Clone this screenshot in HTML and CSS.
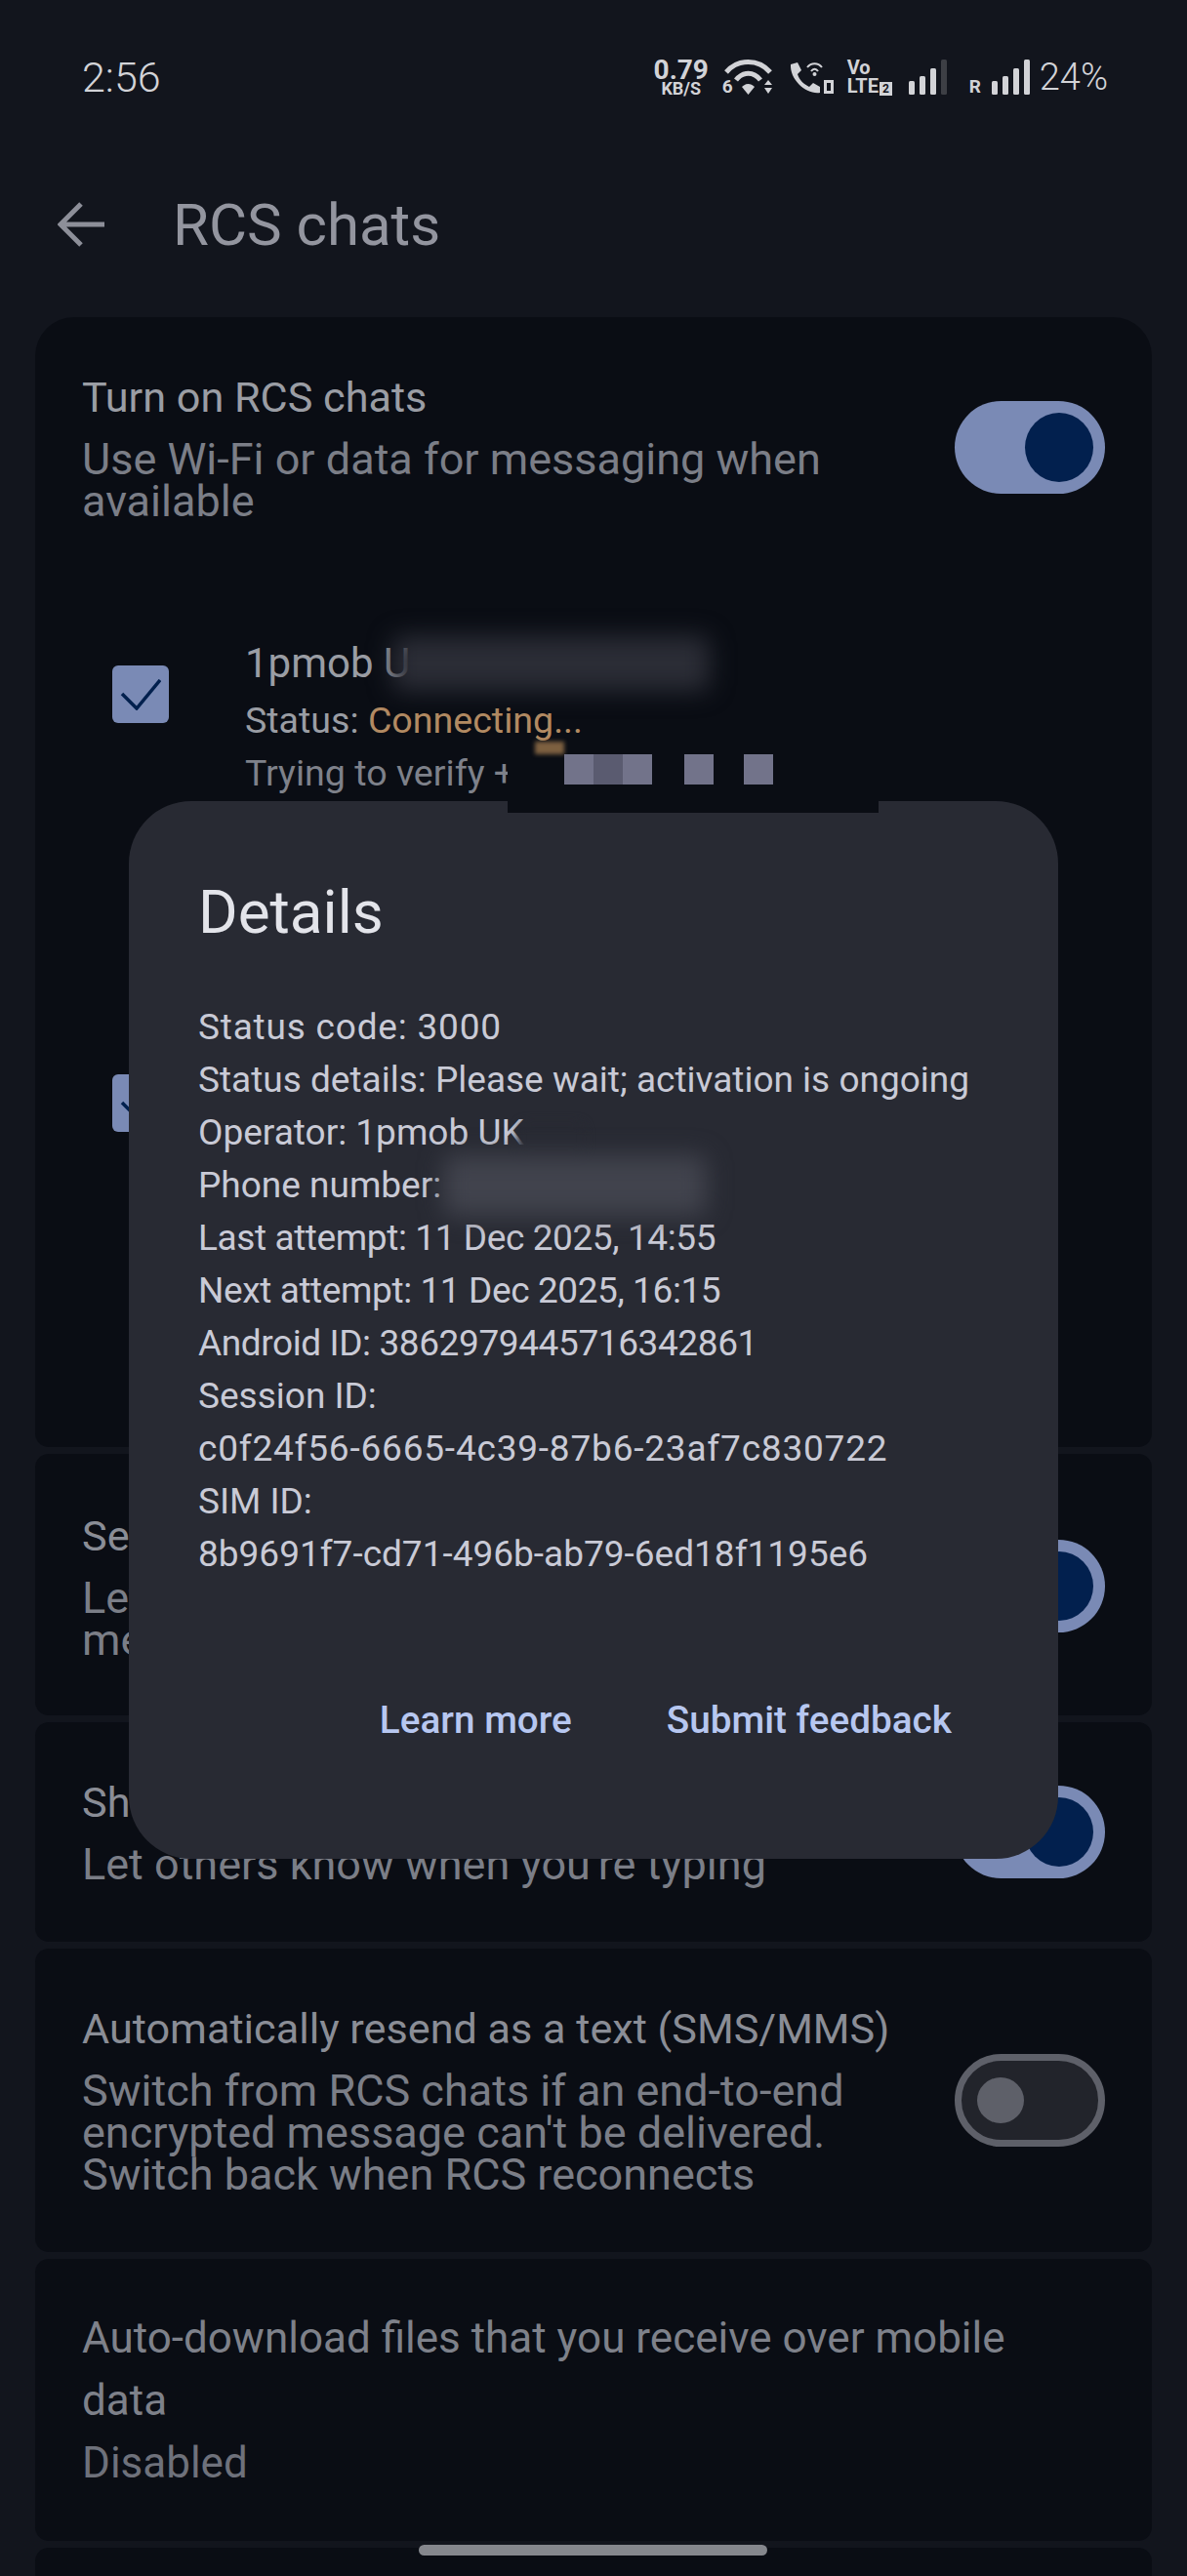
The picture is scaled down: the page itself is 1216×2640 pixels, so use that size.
FILE: index.html
```html
<!DOCTYPE html>
<html lang="en">
<head>
    <meta charset="UTF-8">
    <meta name="viewport" content="width=device-width, initial-scale=1.0">
    <title>RCS chats</title>
    <link rel="stylesheet" href="styles.css">
</head>
<body>
    <div class="screen">
        <div class="status-bar">
            <span class="clock">2:56</span>
            <div class="status-icons">
                <div class="speed"><span class="speed-num">0.79</span><span class="speed-unit">KB/S</span></div>
                <div class="wifi">
                    <span class="wifi-six">6</span>
                    <svg width="53" height="37" viewBox="0 0 53 37">
                        <path d="M4 13 C16 -1 37 -1 49 13" fill="none" stroke="#d2d3d7" stroke-width="5"/>
                        <path d="M14 21 C21 12 32 12 39 21" fill="none" stroke="#d2d3d7" stroke-width="5"/>
                        <path d="M20 28 C24 24 29 24 33 28 L26.500 36 Z" fill="#d2d3d7"/>
                        <path d="M43 26 L47 21 L51 26 Z M43 29 L51 29 L47 35 Z" fill="#d2d3d7"/>
                    </svg>
                </div>
                <svg class="call" width="47" height="37" viewBox="0 0 47 37">
                    <path d="M2 5 L9 3 L13 11 L9 15 C11 21 15 25 21 28 L25 24 L32 28 L32 34 C18 36 1 21 2 5 Z" fill="#d2d3d7"/>
                    <path d="M19 8 C23 3 30 3 34 8 M23 12 C25 9 28 9 30 12" fill="none" stroke="#d2d3d7" stroke-width="2"/>
                    <circle cx="26.500" cy="15" r="2" fill="#d2d3d7"/>
                    <path d="M36 21 H46 V35 H36 Z M39 24 V32 H43 V24 Z" fill="#d2d3d7" fill-rule="evenodd"/>
                </svg>
                <div class="volte"><span class="volte-top">Vo</span><span class="volte-low">LTE<span class="sim-two">2</span></span></div>
                <svg class="signal" width="39" height="37" viewBox="0 0 39 37">
                    <rect x="0" y="22" width="6" height="14" rx="1.500" fill="#d2d3d7"/>
                    <rect x="11" y="17" width="6" height="19" rx="1.500" fill="#d2d3d7"/>
                    <rect x="22" y="9" width="6" height="27" rx="1.500" fill="#d2d3d7"/>
                    <rect x="33" y="0" width="6" height="36" rx="1.500" fill="#3d3f45"/>
                </svg>
                <span class="roaming">R</span>
                <svg class="signal" width="39" height="37" viewBox="0 0 39 37">
                    <rect x="0" y="22" width="6" height="14" rx="1.500" fill="#d2d3d7"/>
                    <rect x="11" y="17" width="6" height="19" rx="1.500" fill="#d2d3d7"/>
                    <rect x="22" y="9" width="6" height="27" rx="1.500" fill="#d2d3d7"/>
                    <rect x="33" y="0" width="6" height="36" rx="1.500" fill="#d2d3d7"/>
                </svg>
                <span class="battery">24%</span>
            </div>
        </div>

        <div class="app-bar">
            <svg class="back" width="48" height="46" viewBox="0 0 48 46">
                <path d="M24 2 L3 23 L24 44 M3 23 H48" fill="none" stroke="#8d8f99" stroke-width="5"/>
            </svg>
            <span class="app-title">RCS chats</span>
        </div>

        <div class="cards">
            <section class="card card-main">
                <div class="row row-main">
                    <div class="row-text">
                        <div class="title">Turn on RCS chats</div>
                        <div class="sub">Use Wi-Fi or data for messaging when available</div>
                    </div>
                    <div class="switch on"><span class="thumb"></span></div>
                </div>
                <div class="sim">
                    <span class="check">
                        <svg width="42" height="32" viewBox="0 0 42 32"><path d="M2 15 L17 30 L41 1" fill="none" stroke="#02204e" stroke-width="3.500"/></svg>
                    </span>
                    <div class="sim-text">
                        <div class="sim-name">1pmob U</div>
                        <div class="sim-line">Status: <span class="connecting">Connecting...</span></div>
                        <div class="sim-line sim-dim">Trying to verify +</div>
                    </div>
                </div>
                <div class="sim">
                    <span class="check">
                        <svg width="42" height="32" viewBox="0 0 42 32"><path d="M2 15 L17 30 L41 1" fill="none" stroke="#02204e" stroke-width="3.500"/></svg>
                    </span>
                </div>
            </section>

            <section class="card card-read">
                <div class="row">
                    <div class="row-text">
                        <div class="title">Send read receipts</div>
                        <div class="sub">Let others know when you've read their messages</div>
                    </div>
                    <div class="switch on"><span class="thumb"></span></div>
                </div>
            </section>

            <section class="card card-typing">
                <div class="row">
                    <div class="row-text">
                        <div class="title">Show typing indicators</div>
                        <div class="sub">Let others know when you're typing</div>
                    </div>
                    <div class="switch on"><span class="thumb"></span></div>
                </div>
            </section>

            <section class="card card-resend">
                <div class="row">
                    <div class="row-text">
                        <div class="title">Automatically resend as a text (SMS/MMS)</div>
                        <div class="sub">Switch from RCS chats if an end-to-end encrypted message can't be delivered. Switch back when RCS reconnects</div>
                    </div>
                    <div class="switch off"><span class="thumb"></span></div>
                </div>
            </section>

            <section class="card card-download">
                <div class="loose">Auto-download files that you receive over mobile data</div>
                <div class="loose sub-tone">Disabled</div>
            </section>

            <section class="card card-last"></section>
        </div>

        <!-- parches que tapan los datos privados -->
        <div class="smudge smudge-name"></div>

        <div class="dialog">
            <h2 class="dialog-title">Details</h2>
            <div class="dialog-body">
                <div class="wide">Status code: 3000</div>
                <div>Status details: Please wait; activation is ongoing</div>
                <div>Operator: 1pmob UK</div>
                <div>Phone number:</div>
                <div class="tight">Last attempt: 11 Dec 2025, 14:55</div>
                <div class="tight">Next attempt: 11 Dec 2025, 16:15</div>
                <div class="tight">Android ID: 3862979445716342861</div>
                <div>Session ID:</div>
                <div class="wide">c0f24f56-6665-4c39-87b6-23af7c830722</div>
                <div>SIM ID:</div>
                <div>8b9691f7-cd71-496b-ab79-6ed18f1195e6</div>
            </div>
            <div class="dialog-actions">
                <span>Learn more</span>
                <span>Submit feedback</span>
            </div>
        </div>
        <div class="smudge smudge-operator"></div>
        <div class="smudge smudge-phone"></div>
        <div class="censor"></div>
        <div class="orange-bit"></div>
        <div class="blocks">
            <span class="block"></span><span class="block block-dark"></span><span class="block"></span>
            <span class="block block-gap"></span><span class="block block-gap2"></span>
        </div>

        <div class="home-bar"></div>
    </div>
</body>
</html>
```

FILE: styles.css
```css
* {
    box-sizing: border-box;
}
body {
    margin: 0;
    background-color: #12151d;
    font-family: Roboto, "Noto Sans", sans-serif;
}
.screen {
    position: relative;
    width: 1216px;
    height: 2640px;
    overflow: hidden;
    background-color: #12151d;
}

/* barra de estado */
.status-bar {
    height: 140px;
    padding: 58px 81px 0 84px;
    display: flex;
    justify-content: space-between;
    align-items: flex-start;
    color: #d2d3d7;
}
.clock {
    font-size: 43px;
    line-height: 42px;
    font-weight: 300;
}
.status-icons {
    display: flex;
    align-items: flex-end;
    height: 38px;
    margin-top: 2px;
}
.speed {
    display: flex;
    flex-direction: column;
    align-items: center;
    width: 56px;
    font-weight: 700;
    margin-right: 14px;
}
.speed-num {
    font-size: 28px;
    line-height: 23px;
}
.speed-unit {
    font-size: 18px;
    line-height: 15px;
}
.wifi {
    position: relative;
    width: 53px;
    height: 37px;
    margin-right: 15px;
}
.wifi-six {
    position: absolute;
    left: 0;
    bottom: 0;
    font-size: 19px;
    line-height: 19px;
    font-weight: 700;
}
.call {
    margin-right: 13px;
}
.volte {
    display: flex;
    flex-direction: column;
    width: 47px;
    font-size: 20px;
    line-height: 19px;
    font-weight: 700;
    margin-right: 16px;
}
.sim-two {
    display: inline-block;
    width: 13px;
    height: 14px;
    margin-left: 1px;
    font-size: 12px;
    line-height: 14px;
    text-align: center;
    color: #12151d;
    background-color: #d2d3d7;
}
.roaming {
    width: 12px;
    margin: 0 11px 0 23px;
    font-size: 19px;
    line-height: 19px;
    font-weight: 700;
}
.battery {
    margin-left: 10px;
    font-size: 38px;
    line-height: 38px;
    font-weight: 300;
}

/* encabezado */
.app-bar {
    height: 185px;
    padding: 0 0 5px 59px;
    display: flex;
    align-items: center;
    gap: 70px;
}
.app-title {
    font-size: 60px;
    color: #93959f;
}

/* tarjetas */
.cards {
    padding: 0 36px;
    display: flex;
    flex-direction: column;
    gap: 7px;
}
.card {
    background-color: #0a0d14;
    border-radius: 14px;
    padding: 0 48px;
}
.card-main {
    height: 1158px;
    border-radius: 40px 40px 14px 14px;
    padding-top: 57px;
}
.card-read {
    height: 268px;
    padding-top: 59px;
}
.card-typing {
    height: 225px;
    padding-top: 57px;
}
.card-resend {
    height: 311px;
    padding-top: 57px;
}
.card-download {
    height: 289px;
    padding-top: 49px;
}
.card-last {
    height: 60px;
}
.row {
    display: flex;
    align-items: center;
    justify-content: space-between;
}
.row-text {
    width: 810px;
}
.title {
    white-space: nowrap;
    font-size: 43.200px;
    line-height: 52px;
    color: #8a8d96;
}
.card-main .title {
    color: #9a9da4;
}
.sub {
    margin-top: 15px;
    font-size: 45px;
    line-height: 43px;
    color: #7b7e87;
}
.switch {
    flex: none;
    width: 154px;
    height: 95px;
    border-radius: 48px;
    display: flex;
    align-items: center;
}
.switch.on {
    background-color: #7a8ab5;
    justify-content: flex-end;
    padding-right: 12px;
}
.switch.on .thumb {
    width: 70px;
    height: 71px;
    border-radius: 50%;
    background-color: #02204e;
}
.switch.off {
    background-color: #22242b;
    border: 7px solid #5e6069;
    padding-left: 16px;
}
.switch.off .thumb {
    width: 48px;
    height: 47px;
    border-radius: 50%;
    background-color: #5e6069;
}
.loose {
    max-width: 1000px;
    font-size: 44px;
    line-height: 64px;
    color: #7e818a;
}
.sub-tone {
    color: #6e717b;
}

/* lista de SIM */
.sim {
    height: 419px;
    padding: 120px 0 0 31px;
    display: flex;
    gap: 78px;
}
.check {
    flex: none;
    width: 58px;
    height: 59px;
    margin-top: 27px;
    border-radius: 6px;
    background-color: #7a8ab5;
    display: flex;
    align-items: center;
    justify-content: center;
}
.sim-name {
    font-size: 42px;
    line-height: 50px;
    color: #9a9da4;
}
.sim-line {
    margin-top: 12px;
    font-size: 37.600px;
    line-height: 42px;
    color: #9a9da4;
}
.sim-dim {
    color: #7e818a;
}
.connecting {
    color: #b28a62;
}

/* datos tapados */
.smudge {
    position: absolute;
    filter: blur(12px);
    border-radius: 10px;
}
.smudge-name {
    left: 402px;
    top: 652px;
    width: 325px;
    height: 56px;
    background-color: #2b2d36;
}
.smudge-operator {
    left: 530px;
    top: 1150px;
    width: 70px;
    height: 34px;
    background-color: #282a33;
    filter: blur(5px);
}
.smudge-phone {
    left: 454px;
    top: 1184px;
    width: 270px;
    height: 62px;
    background-color: #41434d;
}
.censor {
    position: absolute;
    left: 520px;
    top: 768px;
    width: 380px;
    height: 65px;
    background-color: #0a0d14;
}
.orange-bit {
    position: absolute;
    left: 548px;
    top: 760px;
    width: 30px;
    height: 13px;
    background-color: #7d6040;
    filter: blur(2px);
}
.blocks {
    position: absolute;
    left: 578px;
    top: 773px;
    display: flex;
}
.block {
    width: 30px;
    height: 31px;
    background-color: #72738a;
}
.block-dark {
    background-color: #5a5b70;
}
.block-gap {
    margin-left: 33px;
}
.block-gap2 {
    margin-left: 31px;
}

/* dialogo */
.dialog {
    position: absolute;
    left: 132px;
    top: 821px;
    width: 952px;
    height: 1084px;
    padding: 78px 71px 0;
    border-radius: 64px;
    background-color: #282a33;
}
.dialog-title {
    margin: 0 0 55px;
    font-size: 62px;
    line-height: 72px;
    font-weight: 400;
    color: #e3e4ea;
}
.dialog-body {
    font-size: 37px;
    line-height: 54px;
    color: #c9cad6;
}
.wide {
    letter-spacing: 0.8px;
}
.tight {
    letter-spacing: -0.4px;
}
.dialog-actions {
    margin-top: 116px;
    padding-right: 38px;
    display: flex;
    justify-content: flex-end;
    gap: 97px;
    font-size: 38.700px;
    line-height: 54px;
    font-weight: 500;
    color: #b7c7f0;
}

.home-bar {
    position: absolute;
    left: 429px;
    top: 2608px;
    width: 357px;
    height: 11px;
    border-radius: 6px;
    background-color: #85878d;
}
```
